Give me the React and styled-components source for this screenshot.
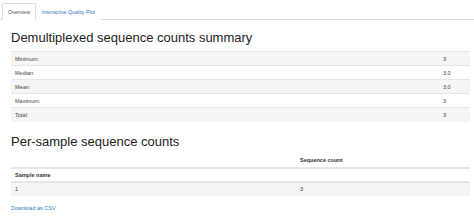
import React from 'react'
import styled, { createGlobalStyle } from 'styled-components'

const Global = createGlobalStyle`
  html, body { margin: 0; padding: 0; background: #fff; }
  body { font-family: "Liberation Sans", Arial, sans-serif; color: #333; }
`

const Page = styled.div`
  width: 474px;
  height: 216px;
  overflow: hidden;
`

const Tabs = styled.ul`
  list-style: none;
  margin: 0;
  padding: 3px 0 0 2px;
  display: flex;
  border-bottom: 1px solid #ddd;
`

const Tab = styled.li`
  font-size: 5.3px;
  line-height: 6px;
  padding: 5px 5px 4px;
  margin-bottom: -1px;
  border: 1px solid ${props => (props.active ? '#ddd' : 'transparent')};
  border-bottom-color: ${props => (props.active ? '#fff' : 'transparent')};
  border-radius: 2px 2px 0 0;
  color: ${props => (props.active ? '#555' : '#337ab7')};
  background: #fff;
`

const Content = styled.div`
  padding: 0 4px 0 11px;
`

const Title = styled.h2`
  margin: ${props => props.m || '10px 0 5px'};
  font-size: 13px;
  font-weight: 400;
  line-height: 16px;
  color: #222;
`

const Table = styled.table`
  width: 459px;
  border-collapse: collapse;
  font-size: 5.5px;
`

const Row = styled.tr`
  background: ${props => (props.striped ? '#f5f5f5' : '#fff')};
`

const Cell = styled.td`
  height: 14px;
  padding: 0 4px;
  border-top: 1px solid #e6e6e6;
  text-align: left;
  vertical-align: middle;
  box-sizing: border-box;
  width: ${props => props.w || 'auto'};
  color: #444;
`

const Head = styled.th`
  height: 14px;
  padding: 0 4px;
  text-align: left;
  vertical-align: middle;
  box-sizing: border-box;
  font-weight: 700;
  color: #333;
  border-bottom: 2px solid #e6e6e6;
  width: ${props => props.w || 'auto'};
`

const Link = styled.a`
  display: block;
  margin-top: 9px;
  font-size: 5.5px;
  color: #337ab7;
  text-decoration: none;
`

const summary = [
  ['Minimum:', '3'],
  ['Median:', '3.0'],
  ['Mean:', '3.0'],
  ['Maximum:', '3'],
  ['Total:', '3'],
]

export default function App() {
  return (
    <Page>
      <Global />
      <Tabs>
        <Tab active>Overview</Tab>
        <Tab>Interactive Quality Plot</Tab>
      </Tabs>
      <Content>
        <Title>Demultiplexed sequence counts summary</Title>
        <Table>
          <tbody>
            {summary.map(([k, v], i) => (
              <Row key={k} striped={i % 2 === 0}>
                <Cell w="428px">{k}</Cell>
                <Cell>{v}</Cell>
              </Row>
            ))}
          </tbody>
        </Table>
        <Title m="12px 0 4px">Per-sample sequence counts</Title>
        <Table>
          <thead>
            <tr>
              <Head w="285px"></Head>
              <Head>Sequence count</Head>
            </tr>
            <tr>
              <Head>Sample name</Head>
              <Head></Head>
            </tr>
          </thead>
          <tbody>
            <Row striped>
              <Cell>1</Cell>
              <Cell>3</Cell>
            </Row>
          </tbody>
        </Table>
        <Link href="#">Download as CSV</Link>
      </Content>
    </Page>
  )
}
